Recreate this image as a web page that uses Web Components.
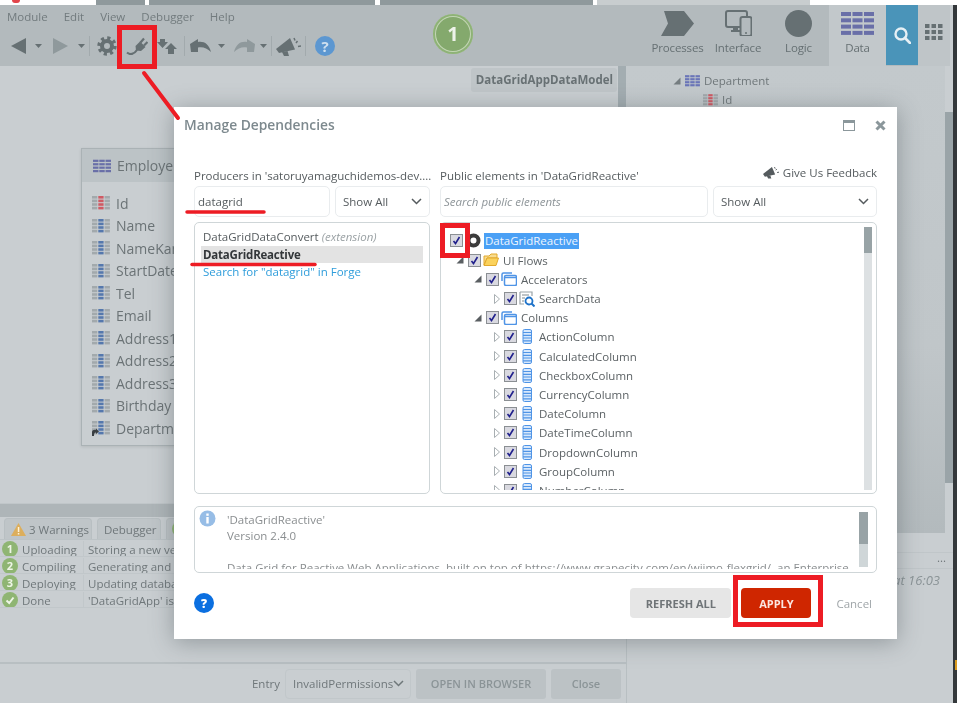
<!DOCTYPE html>
<html>
<head>
<meta charset="utf-8">
<title>Manage Dependencies</title>
<style>
  html, body { margin: 0; padding: 0; height: 100%; overflow: hidden; background: #c9ced1; }
  body { font: 11.5px "Open Sans", "Liberation Sans", sans-serif; color: #6b7376; }
</style>
</head>
<body>

<studio-app>
  <studio-toolbar slot="toolbar"></studio-toolbar>
  <model-canvas slot="canvas">
    <entity-card title="Employee">
      <entity-field kind="key">Id</entity-field>
      <entity-field>Name</entity-field>
      <entity-field>NameKana</entity-field>
      <entity-field>StartDate</entity-field>
      <entity-field>Tel</entity-field>
      <entity-field>Email</entity-field>
      <entity-field>Address1</entity-field>
      <entity-field>Address2</entity-field>
      <entity-field>Address3</entity-field>
      <entity-field>Birthday</entity-field>
      <entity-field kind="ref">Department</entity-field>
    </entity-card>
  </model-canvas>
  <output-panel slot="output"></output-panel>
  <side-panel slot="side"></side-panel>
</studio-app>

<deps-dialog>
  <dep-row slot="tree" level="0" icon="ring" selected>DataGridReactive</dep-row>
  <dep-row slot="tree" level="1" state="open" icon="folder">UI Flows</dep-row>
  <dep-row slot="tree" level="2" state="open" icon="flow">Accelerators</dep-row>
  <dep-row slot="tree" level="3" state="closed" icon="screen">SearchData</dep-row>
  <dep-row slot="tree" level="2" state="open" icon="flow">Columns</dep-row>
  <dep-row slot="tree" level="3" state="closed" icon="column">ActionColumn</dep-row>
  <dep-row slot="tree" level="3" state="closed" icon="column">CalculatedColumn</dep-row>
  <dep-row slot="tree" level="3" state="closed" icon="column">CheckboxColumn</dep-row>
  <dep-row slot="tree" level="3" state="closed" icon="column">CurrencyColumn</dep-row>
  <dep-row slot="tree" level="3" state="closed" icon="column">DateColumn</dep-row>
  <dep-row slot="tree" level="3" state="closed" icon="column">DateTimeColumn</dep-row>
  <dep-row slot="tree" level="3" state="closed" icon="column">DropdownColumn</dep-row>
  <dep-row slot="tree" level="3" state="closed" icon="column">GroupColumn</dep-row>
  <dep-row slot="tree" level="3" state="closed" icon="column">NumberColumn</dep-row>
</deps-dialog>

<annot-layer></annot-layer>

<script>
// ---- icons, all inline svg ----
function bars(colors, x, y, w, h, gapX, gapY) {
  // grid of little bars: colors is one string per column
  let out = "";
  colors.forEach((c, col) => {
    for (let r = 0; r < 4; r++) {
      out += `<rect x="${x + col * (w + gapX)}" y="${y + r * (h + gapY)}" width="${w}" height="${h}" fill="${c}"/>`;
    }
  });
  return out;
}

const ICONS = {
  back: [15, 16, `<path d="M15 0V16L0 8Z" fill="currentColor"/>`],
  forward: [15, 16, `<path d="M0 0V16L15 8Z" fill="currentColor"/>`],
  caret: [7, 4, `<path d="M0 0H7L3.5 4Z" fill="currentColor"/>`],
  gear: [20, 20, `<circle cx="10" cy="10" r="5" fill="none" stroke="currentColor" stroke-width="4"/><circle cx="10" cy="10" r="8" fill="none" stroke="currentColor" stroke-width="3.4" stroke-dasharray="3.14 3.14"/>`],
  plug: [22, 18, `<path d="M1 15.500C4 18 8 17.500 11 13" fill="none" stroke="currentColor" stroke-width="2.200"/><path d="M10 13.500L9.500 9L14 4.500L19.500 10L15 14Z" fill="currentColor"/><path d="M14.500 5.500L18 1.500M18 8.500L21.500 5" stroke="currentColor" stroke-width="2.200"/>`],
  swap: [20, 15, `<path d="M3 0H8V3H11L5.500 9L0 3H3Z" fill="currentColor"/><path d="M14 4L20 10H17V15H11V10H8Z" fill="currentColor"/>`],
  undo: [21, 14, `<path d="M0 5L8 0V3C14 2 19 5 21 13C17 8.500 12 7.500 8 8.500V13H1Z" fill="currentColor"/>`],
  redo: [21, 14, `<path d="M21 5L13 0V3C7 2 2 5 0 13C4 8.500 9 7.500 13 8.500V13H20Z" fill="currentColor"/>`],
  horn: [25, 19, `<path d="M0 12L3 16L19 12.500L14 1Z" fill="currentColor"/><path d="M6 15L8 19H13L11.500 14Z" fill="currentColor"/><path d="M18 1L19 3.500M21.500 4L20 6M25 9L22 9.500" stroke="currentColor" stroke-width="1.500"/>`],
  help: [20, 20, `<circle cx="10" cy="10" r="10" fill="#5c97d1"/><text x="10" y="15.500" text-anchor="middle" font-family="Open Sans" font-weight="700" font-size="15" fill="#cfe0ef">?</text>`],
  process: [33, 25, `<path d="M3 0H23L33 12.500L23 25H0L7 12.500Z" fill="currentColor"/>`],
  iface: [27, 26, `<rect x="1" y="1" width="21" height="16" rx="2" fill="none" stroke="currentColor" stroke-width="2"/><path d="M8 17H13V20H16V22H6V20H8Z" fill="currentColor"/><rect x="15.500" y="7" width="11" height="19" rx="2" fill="#b3babd" stroke="currentColor" stroke-width="2"/><circle cx="21" cy="23" r="1" fill="currentColor"/>`],
  logic: [27, 27, `<circle cx="13.500" cy="13.500" r="13.500" fill="currentColor"/>`],
  data: [33, 23, bars(["#696fa8", "#696fa8", "#696fa8"], 0, 0, 10, 4, 1.500, 2.300)],
  search: [17, 17, `<circle cx="7" cy="7" r="5.500" fill="none" stroke="#e6f0f5" stroke-width="2.400"/><path d="M11 11L16 16" stroke="#e6f0f5" stroke-width="2.600" stroke-linecap="round"/>`],
  dots: [18, 16, [0, 6.500, 13].map(x => [0, 6, 12].map(y => `<rect x="${x}" y="${y}" width="4.500" height="4" fill="currentColor"/>`).join("")).join("")],
  table: [18, 14, bars(["#6a75b8", "#6a75b8", "#6a75b8"], 0, 0, 5.300, 2.600, 1, 1)],
  fieldkey: [18, 14, bars(["#a2a9ac", "#cf5a64", "#a2a9ac"], 0, 0, 5.300, 2.600, 1, 1)],
  field: [18, 14, bars(["#a2a9ac", "#5578ad", "#a2a9ac"], 0, 0, 5.300, 2.600, 1, 1)],
  fieldref: [18, 15, bars(["#a2a9ac", "#5578ad", "#a2a9ac"], 0, 0, 5.300, 2.600, 1, 1) + `<path d="M0 15V11C0 9.500 2 8.500 4 9V7.500L7 10.500L4 13V11.500C3 11 2 12 2 15Z" fill="#3a3f42"/>`],
  warn: [15, 13, `<path d="M7.500 0L15 13H0Z" fill="#dcae5c"/><rect x="6.800" y="4" width="1.500" height="5" fill="#fff3d9"/><rect x="6.800" y="10" width="1.500" height="1.500" fill="#fff3d9"/>`],
  ring: [15, 15, `<circle cx="7.500" cy="7.500" r="5" fill="none" stroke="#3c3c3c" stroke-width="4"/>`],
  folder: [16, 14, `<path d="M1 3H6L8 1H14V5H4L1 12Z" fill="#f8dc8f" stroke="#e2a92c" stroke-width="1"/><path d="M1 12.500L4 5H15.500L13 12.500Z" fill="#fbd25c" stroke="#e2a92c" stroke-width="1"/>`],
  flow: [16, 14, `<path d="M1 9V2.500C1 1.500 1.500 1 2.500 1H11" fill="none" stroke="#4f94e6" stroke-width="1.500"/><rect x="3.500" y="3.500" width="12" height="10" rx="1.500" fill="#fff" stroke="#4f94e6" stroke-width="1.500"/><path d="M3.500 5.500H15.500" stroke="#4f94e6" stroke-width="1.500"/>`],
  screen: [16, 16, `<path d="M1 1H13V5M1 1V13H5" fill="none" stroke="#9aa3a8" stroke-width="1.200"/><path d="M3 4H10M3 7H6M3 10H5" stroke="#7f8a90" stroke-width="1.200"/><circle cx="10" cy="10" r="3.500" fill="#fff" stroke="#1f73c9" stroke-width="1.800"/><path d="M12.500 12.500L15.500 15.500" stroke="#1f73c9" stroke-width="2"/>`],
  column: [16, 15, `<rect x="4" y="0.500" width="8.500" height="14" rx="1.500" fill="#d7e8fc" stroke="#4f94e6"/><path d="M4 3.500H12.500M4 6.300H12.500M4 9H12.500M4 11.800H12.500" stroke="#4f94e6" stroke-width="1.200"/>`],
  info: [17, 17, `<circle cx="8.500" cy="8.500" r="8" fill="#97bde6"/><rect x="7.300" y="7" width="2.400" height="6.500" fill="#fff"/><rect x="7.300" y="3.500" width="2.400" height="2.300" fill="#fff"/>`],
  helpblue: [20, 20, `<circle cx="10" cy="10" r="10" fill="#0b6fe0"/><text x="10" y="14.500" text-anchor="middle" font-family="Open Sans" font-weight="800" font-size="12" fill="#fff">?</text>`],
  chevron: [11, 7, `<path d="M1 1L5.500 5.500L10 1" fill="none" stroke="currentColor" stroke-width="1.500"/>`],
  maxi: [12, 11, `<rect x="0.500" y="0.500" width="11" height="10" fill="none" stroke="#8b979b"/><rect x="0" y="0" width="12" height="3" fill="#8b979b"/>`],
  close: [11, 11, `<path d="M1.500 1.500L9.500 9.500M9.500 1.500L1.500 9.500" stroke="#8b979b" stroke-width="3"/>`],
  open: [8, 8, `<path d="M7.500 0.500V7.500H0.500Z" fill="#5a5f62"/>`],
  closed: [6, 10, `<path d="M0.500 0.500L5.500 5L0.500 9.500Z" fill="#fff" stroke="#a8afb2"/>`],
};

function icon(name, extra = "") {
  const [w, h, body] = ICONS[name];
  return `<svg ${extra} width="${w}" height="${h}" viewBox="0 0 ${w} ${h}" style="display:block;flex:none">${body}</svg>`;
}

function numberBadge(n) {
  const inner = n === "ok"
    ? `<path d="M4.500 8.500L7.200 11L11.500 5.500" fill="none" stroke="#eef5e6" stroke-width="2"/>`
    : `<text x="8" y="12" text-anchor="middle" font-family="Open Sans" font-weight="700" font-size="11" fill="#eef5e6">${n}</text>`;
  return `<svg width="16" height="16" viewBox="0 0 16 16" style="display:block;flex:none"><circle cx="8" cy="8" r="8" fill="#8fb573"/>${inner}</svg>`;
}

// small helper so each class stays short
class ShadowEl extends HTMLElement {
  constructor() {
    super();
    this.attachShadow({ mode: "open" });
  }
  connectedCallback() {
    this.shadowRoot.innerHTML = this.html();
  }
}

// ---- page shell ----
class StudioApp extends ShadowEl {
  html() {
    return `
    <style>
      :host { display: grid; width: 957px; height: 703px; grid-template-columns: 953px 4px; grid-template-rows: 5px 61px 1fr; filter: blur(.4px); }
      .tabs { grid-column: 1 / 3; display: flex; background: #fff; }
      .tabs i { display: block; height: 5px; background: #8f999c; }
      .tabs u { display: block; width: 8px; height: 3px; margin: 0 0 0 12px; background: #e2454a; border-radius: 0 0 4px 4px; }
      .edge { grid-row: 2 / 4; grid-column: 2; background: #34383b; display: flex; flex-direction: column; justify-content: flex-end; }
      .edge b { display: block; height: 10px; margin: 0 0 33px 2px; background: #d99a1e; }
      .main { display: grid; grid-template-columns: 626px 1fr; min-height: 0; background: #c9ced1; }
      .left { display: grid; grid-template-rows: 437px 1fr; min-height: 0; min-width: 0; }
      .top { display: grid; grid-template-columns: 618px 8px; min-height: 0; }
      .split { background: #a3adb1; }
    </style>
    <div class="tabs">
      <div style="width:96px"><u></u></div>
      <i style="width:49px"></i><i style="width:4px;background:#fff"></i>
      <i style="width:226px"></i><i style="width:5px;background:#fff"></i>
      <i style="width:213px"></i><i style="width:4px;background:#fff"></i>
      <i style="width:213px;background:#c8cdcf"></i>
    </div>
    <slot name="toolbar"></slot>
    <div class="edge"><b></b></div>
    <div class="main">
      <div class="left">
        <div class="top"><slot name="canvas"></slot><div class="split"></div></div>
        <slot name="output"></slot>
      </div>
      <slot name="side"></slot>
    </div>`;
  }
}

class StudioToolbar extends ShadowEl {
  html() {
    const tab = (ic, label, w, extra = "") => `
      <div class="tab" style="width:${w}px;${extra}"><div class="ti">${icon(ic)}</div><span>${label}</span></div>`;
    return `
    <style>
      :host { display: flex; height: 61px; background: #b3babd; color: #667073; font-size: 11.500px; }
      .left { width: 433px; flex: none; }
      .menu { display: flex; height: 23px; align-items: center; padding: 0 0 0 7px; color: #727b7e; }
      .tools { display: flex; align-items: center; height: 36px; padding-left: 11px; }
      .sep { width: 1px; height: 20px; background: #a2aaad; flex: none; }
      .light { color: #8f999c; }
      .badge { width: 40px; height: 40px; margin-top: 9px; flex: none; border-radius: 50%; background: #84a96d; box-shadow: inset 0 0 0 2px #8eb277, inset 0 0 0 3px #c4d6b6; color: #eef3ea; font: 700 20px/40px "Open Sans", sans-serif; text-align: center; box-sizing: border-box; }
      .space { flex: 1; }
      .tab { display: flex; flex-direction: column; align-items: center; flex: none; }
      .ti { height: 34px; display: flex; align-items: center; padding-top: 2px; box-sizing: border-box; }
      .tab span { line-height: 18px; white-space: nowrap; letter-spacing: -.15px; }
      .search { width: 32px; height: 60px; flex: none; background: #4a94b9; display: flex; align-items: center; justify-content: center; }
      .grid { width: 32px; flex: none; background: #bfc5c8; display: flex; align-items: center; justify-content: center; height: 61px; padding-bottom: 7px; box-sizing: border-box; }
      .gutter { width: 3px; flex: none; background: #c9ced1; }
    </style>
    <div class="left">
      <div class="menu"><span style="margin-right:16px">Module</span><span style="margin-right:16px">Edit</span><span style="margin-right:16px">View</span><span style="margin-right:16px">Debugger</span><span>Help</span></div>
      <div class="tools">
        ${icon("back")}<span style="width:9px"></span>${icon("caret")}
        <span style="width:11px"></span><span class="light">${icon("forward")}</span><span style="width:10px"></span>${icon("caret")}
        <span style="width:4px"></span><div class="sep"></div><span style="width:7px"></span>
        ${icon("gear")}<span style="width:9px"></span>${icon("plug")}<span style="width:9px"></span>${icon("swap")}
        <span style="width:7px"></span><div class="sep"></div><span style="width:5px"></span>
        ${icon("undo")}<span style="width:7px"></span>${icon("caret")}
        <span style="width:9px"></span><span class="light">${icon("redo")}</span><span style="width:5px"></span>${icon("caret")}
        <span style="width:4px"></span><div class="sep"></div><span style="width:4px"></span>
        ${icon("horn")}<span style="width:4px"></span><div class="sep"></div><span style="width:9px"></span>
        ${icon("help")}
      </div>
    </div>
    <div class="badge">1</div>
    <div class="space"></div>
    ${tab("process", "Processes", 61)}
    ${tab("iface", "Interface", 60)}
    ${tab("logic", "Logic", 61)}
    ${tab("data", "Data", 57, "background:#c2c8cb")}
    <div class="search">${icon("search")}</div>
    <div class="grid">${icon("dots")}</div>
    <div class="gutter"></div>`;
  }
}

// ---- data model canvas ----
class ModelCanvas extends ShadowEl {
  html() {
    return `
    <style>
      :host { display: block; position: relative; background: #c9ced1; overflow: hidden; height: 437px; }
      .name { position: absolute; top: 2px; right: 1px; height: 24px; padding: 0 4px 0 5px; background: #bfc5c8; border-radius: 3px; font-weight: 700; line-height: 24px; color: #687174; white-space: nowrap; }
      ::slotted(entity-card) { position: absolute; left: 81px; top: 82px; }
    </style>
    <div class="name">DataGridAppDataModel</div>
    <slot></slot>`;
  }
}

class EntityCard extends ShadowEl {
  html() {
    return `
    <style>
      :host { display: block; width: 190px; height: 298px; box-sizing: border-box; background: #c9ced1; border: 1px solid #aab2b5; box-shadow: 0 1px 3px rgba(0,0,0,.1); color: #6b7376; font-size: 14px; }
      .head { display: flex; align-items: center; height: 33px; background: #bcc3c6; padding-left: 11px; gap: 6px; }
      .rows { padding-top: 10px; }
    </style>
    <div class="head">${icon("data").replace('width="33" height="23"', 'width="18" height="14"')}<span>${this.getAttribute("title")}</span></div>
    <div class="rows"><slot></slot></div>`;
  }
}

class EntityField extends ShadowEl {
  html() {
    const k = this.getAttribute("kind");
    const ic = k === "key" ? "fieldkey" : k === "ref" ? "fieldref" : "field";
    return `
    <style>
      :host { display: flex; align-items: center; height: 22.500px; padding-left: 10px; gap: 6px; white-space: nowrap; }
    </style>
    ${icon(ic)}<slot></slot>`;
  }
}

// ---- deployment output under the canvas ----
class OutputPanel extends ShadowEl {
  html() {
    const row = (badge, a, b) => `<div class="row">${numberBadge(badge)}<span class="a">${a}</span><span class="b">${b}</span></div>`;
    return `
    <style>
      :host { display: flex; flex-direction: column; min-height: 0; background: #c9ced1; color: #6f777a; font-size: 11.500px; }
      .dark { height: 14px; background: #aeb5b8; flex: none; border-top: 1px solid #c0c6c9; box-sizing: border-box; }
      .tabs { display: flex; height: 23px; padding: 1px 0 0 4px; gap: 5px; flex: none; border-bottom: 1px solid #bcc3c6; box-sizing: border-box; }
      .t { display: flex; align-items: center; box-sizing: border-box; background: #bfc5c8; border: 1px solid #b8bfc2; border-bottom: 0; border-radius: 4px 4px 0 0; white-space: nowrap; }
      .row { display: flex; align-items: center; height: 17px; border-bottom: 1px solid #c1c7ca; box-sizing: border-box; padding: 2px 0 0 2px; overflow: hidden; white-space: nowrap; }
      .a { width: 61px; margin-left: 4px; flex: none; }
      .b { padding-left: 4px; border-left: 1px solid #c1c7ca; line-height: 17px; }
      .space { flex: 1; }
      .bar { height: 41px; flex: none; border-top: 2px solid #b8bfc2; box-sizing: border-box; display: flex; align-items: center; justify-content: flex-end; padding: 0 5px 0 0; gap: 5px; }
      .entry { margin-right: 0; }
      .sel { width: 126px; height: 30px; box-sizing: border-box; border: 1px solid #c1c7ca; border-radius: 4px; display: flex; align-items: center; justify-content: space-between; padding: 0 6px 0 7px; }
      .btn { height: 30px; background: #bcc2c5; border-radius: 3px; display: flex; align-items: center; justify-content: center; font-weight: 600; color: #8b9497; font-size: 11px; }
    </style>
    <div class="dark"></div>
    <div class="tabs">
      <div class="t" style="width:88px;padding-left:6px">${icon("warn")}<span style="margin-left:3px">3 Warnings</span></div>
      <div class="t" style="width:64px;padding-left:6px">Debugger</div>
      <div class="t" style="width:100px;padding-left:5px">${numberBadge("ok")}</div>
    </div>
    ${row(1, "Uploading", "Storing a new version")}
    ${row(2, "Compiling", "Generating and")}
    ${row(3, "Deploying", "Updating database")}
    ${row("ok", "Done", "'DataGridApp' is")}
    <div class="space"></div>
    <div class="bar">
      <span class="entry">Entry</span>
      <div class="sel"><span>InvalidPermissions</span>${icon("chevron")}</div>
      <div class="btn" style="width:130px">OPEN IN BROWSER</div>
      <div class="btn" style="width:70px">Close</div>
    </div>`;
  }
}

class SidePanel extends ShadowEl {
  html() {
    return `
    <style>
      :host { display: grid; grid-template-rows: 467px 1fr; grid-template-columns: 319px 8px; min-height: 0; color: #6f777a; font-size: 11.500px; background: #c9ced1; }
      .top { background: linear-gradient(#c3c9cc, #c0c6c9 60%, #b3babd); padding-top: 5px; }
      .line { display: flex; align-items: center; height: 19px; gap: 4px; }
      .bar { background: #c9ced1; padding-top: 46px; box-sizing: border-box; }
      .bar div { height: 371px; background: #9aa4a8; }
      .low { grid-column: 1 / 3; border-left: 1px solid #b8bfc2; }
      .r1 { height: 19px; border-bottom: 1px solid #c0c6c9; }
      .r2 { height: 15px; border-bottom: 1px solid #c0c6c9; text-align: right; padding-right: 7px; line-height: 10px; }
      .r3 { text-align: right; padding: 2px 13px 0 0; font-style: italic; font-size: 13px; color: #8b9497; }
    </style>
    <div class="top">
      <div class="line" style="padding-left:47px">${icon("open").replace("#5a5f62", "#757d80")}${icon("table").replace('width="18" height="14"', 'width="15" height="14"')}<span>Department</span></div>
      <div class="line" style="padding-left:77px">${icon("fieldkey").replace('width="18" height="14"', 'width="15" height="14"')}<span>Id</span></div>
    </div>
    <div class="bar"><div></div></div>
    <div class="low">
      <div class="r1"></div>
      <div class="r2">...</div>
      <div class="r3">at 16:03</div>
    </div>`;
  }
}

// ---- the dialog ----
class DepsDialog extends ShadowEl {
  html() {
    const select = (w, label) => `<div class="ctl sel" style="width:${w}px"><span>${label}</span>${icon("chevron")}</div>`;
    return `
    <style>
      :host { position: absolute; left: 174px; top: 107px; width: 723px; height: 532px; background: #fff; box-shadow: 0 3px 22px rgba(60,70,75,.4); display: flex; flex-direction: column; box-sizing: border-box; color: #555b5e; font-size: 11.500px; filter: blur(.25px); }
      .head { height: 56px; display: flex; align-items: flex-start; padding: 9px 11px 0 10px; box-sizing: border-box; flex: none; }
      .head h1 { margin: 0; font: 600 13.800px/17px "Open Sans", sans-serif; color: #7d898e; flex: 1; }
      .head svg { margin-top: 4px; }
      .cols { display: grid; grid-template-columns: 236px 437px; column-gap: 10px; padding: 0 20px; grid-template-rows: 23px 31px 272px; }
      .lab { display: flex; align-items: center; justify-content: space-between; white-space: nowrap; padding-top: 1px; color: #555b5e; }
      .fb { display: flex; align-items: center; gap: 4px; margin-top: -6px; }
      .ctls { display: flex; gap: 5px; }
      .ctl { height: 31px; box-sizing: border-box; border: 1px solid #e9ecee; border-radius: 5px; display: flex; align-items: center; padding: 0 3px; flex: none; white-space: nowrap; }
      .sel { justify-content: space-between; padding: 0 7px; color: #555b5e; }
      .box { margin-top: 5px; border: 1px solid #cfd6d8; border-radius: 5px; box-sizing: border-box; height: 272px; overflow: hidden; }
      .list { padding: 5px 6px; }
      .it { height: 18px; line-height: 18px; padding-left: 2px; white-space: nowrap; }
      .it em { color: #9aa1a4; }
      .it.on { height: 17px; line-height: 17px; background: #e3e3e3; font-weight: 700; color: #33373a; letter-spacing: -.2px; }
      .it.link { color: #2f9ddb; line-height: 18px; }
      .tree { display: flex; padding: 0; }
      .rows { flex: 1; padding-top: 8.400px; overflow: hidden; height: 267px; box-sizing: border-box; }
      .sb { width: 8px; height: 263px; margin: 4px 4px 0 0; background: #dde1e3; flex: none; }
      .sb div { height: 26px; background: #98a3a6; }
      .info { margin: 17px 20px 0; height: 67px; box-sizing: border-box; border: 1px solid #cfd6d8; border-radius: 5px; display: flex; overflow: hidden; padding: 3px 8px 0 4px; flex: none; }
      .msg { flex: 1; padding: 2px 0 0 11px; color: #8a8e90; line-height: 16px; white-space: nowrap; overflow: hidden; height: 57px; box-sizing: content-box; }
      .info .isb { width: 9px; height: 55px; margin-top: 2px; background: #cfd6d8; flex: none; }
      .isb div { height: 32px; background: #98a3a6; }
      .foot { display: flex; align-items: center; margin-top: 15px; padding: 0 25px 0 20px; height: 30px; flex: none; }
      .foot .sp { flex: 1; }
      .b { height: 30px; border-radius: 4px; display: flex; align-items: center; justify-content: center; font-weight: 700; font-size: 11px; box-sizing: border-box; }
      .refresh { width: 101px; background: #e6e6e6; color: #6f7477; }
      .apply { width: 70px; margin-left: 10px; background: #cf2600; color: #fbe6e0; }
      .cancel { margin-left: 25px; color: #a0a6a9; }
    </style>
    <div class="head"><h1>Manage Dependencies</h1>${icon("maxi")}<span style="width:20px"></span>${icon("close")}</div>
    <div class="cols">
      <div class="lab">Producers in 'satoruyamaguchidemos-dev....</div>
      <div class="lab"><span>Public elements in 'DataGridReactive'</span><span class="fb">${icon("horn").replace('width="25" height="19"', 'width="16" height="13"')}Give Us Feedback</span></div>
      <div class="ctls"><div class="ctl" style="width:136px">datagrid</div>${select(95, "Show All")}</div>
      <div class="ctls"><div class="ctl" style="width:268px;color:#8d9498;font-style:italic">Search public elements</div>${select(164, "Show All")}</div>
      <div class="box list">
        <div class="it">DataGridDataConvert <em>(extension)</em></div>
        <div class="it on">DataGridReactive</div>
        <div class="it link">Search for "datagrid" in Forge</div>
      </div>
      <div class="box tree">
        <div class="rows"><slot name="tree"></slot></div>
        <div class="sb"><div></div></div>
      </div>
    </div>
    <div class="info">
      ${icon("info")}
      <div class="msg">'DataGridReactive'<br>Version 2.4.0<br><br>Data Grid for Reactive Web Applications, built on top of https://www.grapecity.com/en/wijmo-flexgrid/, an Enterprise</div>
      <div class="isb"><div></div></div>
    </div>
    <div class="foot">
      ${icon("helpblue")}
      <span class="sp"></span>
      <div class="b refresh">REFRESH ALL</div>
      <div class="b apply">APPLY</div>
      <div class="cancel">Cancel</div>
    </div>`;
  }
}

class DepRow extends ShadowEl {
  html() {
    const level = +this.getAttribute("level");
    const state = this.getAttribute("state");
    const shift = state === "open" ? -3 : -1;
    const exp = state ? `<span style="margin-left:${shift}px;display:block">${icon(state)}</span>` : "";
    const sel = this.hasAttribute("selected");
    return `
    <style>
      :host { display: flex; align-items: center; height: 19.200px; padding-left: ${level * 18}px; white-space: nowrap; color: #5c6265; }
      .exp { width: 9px; flex: none; display: flex; align-items: center; height: 100%; }
      .chk { width: 13px; height: 13px; box-sizing: border-box; border: 1px solid #8b8f93; background: #d9d9e0; flex: none; display: flex; align-items: center; justify-content: center; }
      .ic { margin-left: 2px; width: 16px; flex: none; display: flex; justify-content: center; }
      .txt { margin-left: 4px; }
      .txt.sel { margin-left: 3px; padding: 0 1px; background: #4aa0f5; color: #eef6ff; line-height: 16px; }
    </style>
    <div class="exp">${exp}</div>
    <div class="chk"><svg width="9" height="9" viewBox="0 0 9 9"><path d="M1.500 5L3.500 7.500L7.500 1" fill="none" stroke="#20208c" stroke-width="1.600"/></svg></div>
    <div class="ic">${icon(this.getAttribute("icon"))}</div>
    <span class="txt ${sel ? "sel" : ""}"><slot></slot></span>`;
  }
}

// ---- red marks somebody drew over the screenshot ----
class AnnotLayer extends ShadowEl {
  html() {
    return `
    <style>
      :host { position: absolute; left: 0; top: 0; width: 957px; height: 703px; pointer-events: none; }
      svg { display: block; }
    </style>
    <svg width="957" height="703" viewBox="0 0 957 703" fill="none" stroke="#ed1c24">
      <rect x="119.500" y="27.500" width="35" height="39" stroke-width="5"/>
      <path d="M144 73L178 118" stroke-width="4" stroke-linecap="round"/>
      <path d="M187 212H264" stroke-width="3.500" stroke-linecap="round"/>
      <path d="M192 264.500H315" stroke-width="3.500" stroke-linecap="round"/>
      <rect x="442.500" y="225.500" width="25" height="30" stroke-width="5"/>
      <rect x="735.500" y="577.500" width="85" height="47" stroke-width="5"/>
    </svg>`;
  }
}

customElements.define("studio-app", StudioApp);
customElements.define("studio-toolbar", StudioToolbar);
customElements.define("model-canvas", ModelCanvas);
customElements.define("entity-card", EntityCard);
customElements.define("entity-field", EntityField);
customElements.define("output-panel", OutputPanel);
customElements.define("side-panel", SidePanel);
customElements.define("deps-dialog", DepsDialog);
customElements.define("dep-row", DepRow);
customElements.define("annot-layer", AnnotLayer);
</script>
</body>
</html>
